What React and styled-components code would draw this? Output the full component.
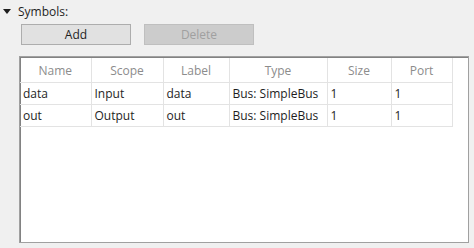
import React from 'react';
import styled, { createGlobalStyle } from 'styled-components';

const GlobalStyle = createGlobalStyle`
    html, body {
        margin: 0;
        padding: 0;
        background: #f0f0f0;
    }
    body {
        font-family: 'Open Sans', 'Liberation Sans', sans-serif;
        font-size: 12px;
        color: #1e1e1e;
    }
`;

const Panel = styled.div`
    width: 474px;
    height: 248px;
    box-sizing: border-box;
    padding: 3px 5px 0px 3px;
    display: flex;
    flex-direction: column;
`;

const Header = styled.div`
    display: flex;
    align-items: center;
    height: 18px;
`;

const Arrow = styled.span`
    width: 0;
    height: 0;
    border-left: 4px solid transparent;
    border-right: 4px solid transparent;
    border-top: 5px solid #1e1e1e;
    margin-right: 7px;
    margin-top: -1px;
`;

const Title = styled.span`
    font-size: 12px;
    line-height: 18px;
`;

const Toolbar = styled.div`
    display: flex;
    gap: 13px;
    margin: 3px 0px 0px 18px;
`;

const Button = styled.button`
    width: 110px;
    height: 21px;
    box-sizing: border-box;
    font-family: inherit;
    font-size: 12px;
    padding: 0;
    border: 1px solid ${(props) => (props.disabled ? '#bfbfbf' : '#adadad')};
    background: ${(props) => (props.disabled ? '#cccccc' : '#e1e1e1')};
    color: ${(props) => (props.disabled ? '#a0a0a0' : '#1e1e1e')};
`;

const TableBox = styled.div`
    margin: 11px 0px 0px 16px;
    height: 187px;
    box-sizing: border-box;
    background: #ffffff;
    border: 1px solid #a0a0a0;
    box-shadow: inset 1px 1px 0px #828282;
`;

const Table = styled.table`
    border-collapse: collapse;
    table-layout: fixed;
    margin-top: 1px;
`;

const Th = styled.th`
    height: 24px;
    padding: 0;
    font-weight: normal;
    color: #8c8c8c;
    text-align: center;
    border-right: 1px solid #e3e3e3;
    border-bottom: 1px solid #e3e3e3;
`;

const Td = styled.td`
    height: 21px;
    padding: 0px 3px;
    color: #1e1e1e;
    text-align: left;
    white-space: nowrap;
    border-right: 1px solid #e3e3e3;
    border-bottom: 1px solid #e3e3e3;
`;

const columns = [
    { name: 'Name', width: 71 },
    { name: 'Scope', width: 72 },
    { name: 'Label', width: 66 },
    { name: 'Type', width: 98 },
    { name: 'Size', width: 64 },
    { name: 'Port', width: 61 },
];

const rows = [
    ['data', 'Input', 'data', 'Bus: SimpleBus', '1', '1'],
    ['out', 'Output', 'out', 'Bus: SimpleBus', '1', '1'],
];

const App = () => {
    return (
        <>
            <GlobalStyle />
            <Panel>
                <Header>
                    <Arrow />
                    <Title>Symbols:</Title>
                </Header>
                <Toolbar>
                    <Button>Add</Button>
                    <Button disabled>Delete</Button>
                </Toolbar>
                <TableBox>
                    <Table>
                        <colgroup>
                            {columns.map((c) => (
                                <col key={c.name} style={{ width: c.width }} />
                            ))}
                        </colgroup>
                        <thead>
                            <tr>
                                {columns.map((c) => (
                                    <Th key={c.name}>{c.name}</Th>
                                ))}
                            </tr>
                        </thead>
                        <tbody>
                            {rows.map((r, i) => (
                                <tr key={i}>
                                    {r.map((v, j) => (
                                        <Td key={j}>{v}</Td>
                                    ))}
                                </tr>
                            ))}
                        </tbody>
                    </Table>
                </TableBox>
            </Panel>
        </>
    );
};

export default App;
